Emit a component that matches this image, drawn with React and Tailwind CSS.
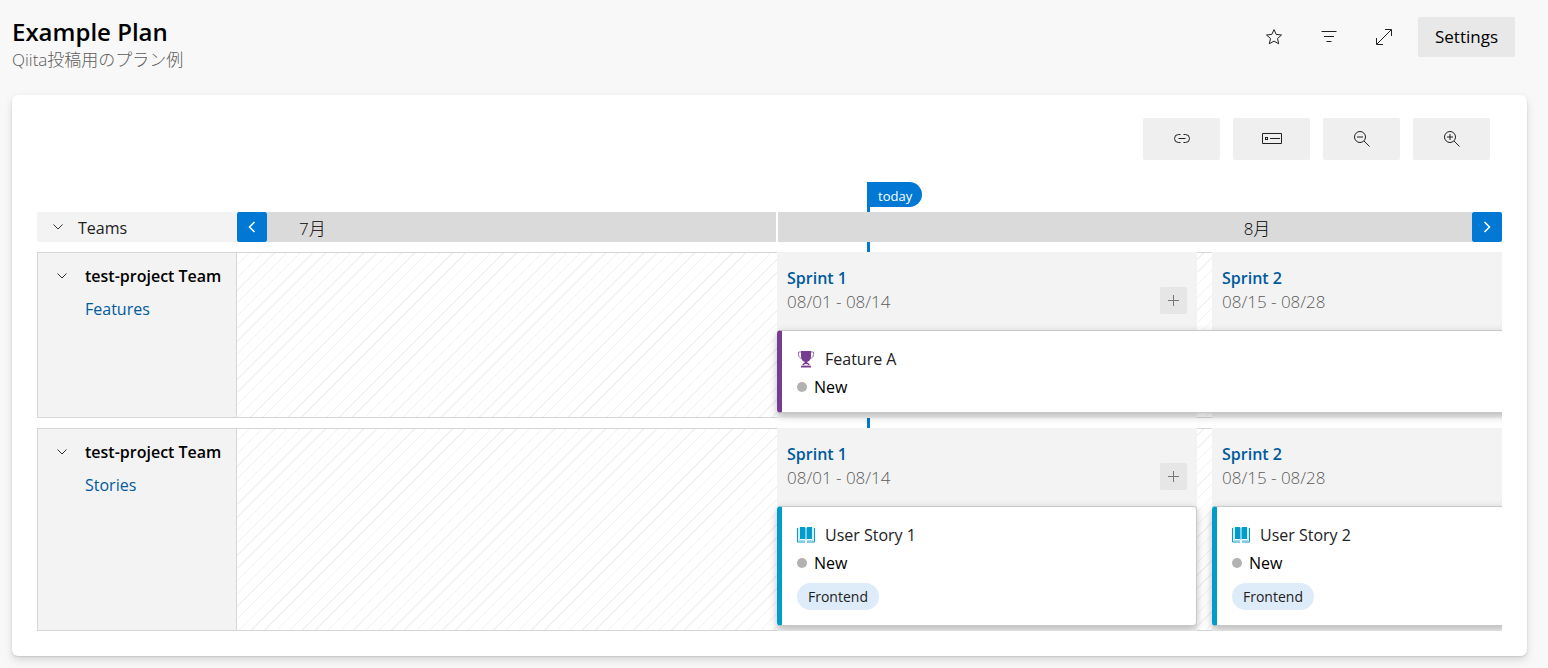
import React from 'react';

const HATCH = 'bg-[repeating-linear-gradient(135deg,#ffffff_0px,#ffffff_8px,#f1f1f1_8px,#f1f1f1_9px)]';

const sprints = [
  { name: 'Sprint 1', dates: '08/01 - 08/14', column: 'col-start-2', canAdd: true },
  { name: 'Sprint 2', dates: '08/15 - 08/28', column: 'col-start-4', canAdd: false },
];

const teams = [
  {
    name: 'test-project Team',
    backlog: 'Features',
    items: [{ title: 'Feature A', type: 'feature', state: 'New', column: 'col-start-2 col-span-3' }],
  },
  {
    name: 'test-project Team',
    backlog: 'Stories',
    items: [
      { title: 'User Story 1', type: 'story', state: 'New', tag: 'Frontend', column: 'col-start-2' },
      { title: 'User Story 2', type: 'story', state: 'New', tag: 'Frontend', column: 'col-start-4' },
    ],
  },
];

const Icon = ({ className = 'w-4 h-4', children }) => (
  <svg viewBox="0 0 16 16" className={className} fill="none" stroke="currentColor" aria-hidden="true">
    {children}
  </svg>
);

const StarIcon = () => (
  <Icon>
    <path d="M8 .6l2.2 4.8 5.3.6-4 3.5 1.2 5.3L8 12.1l-4.7 2.7 1.2-5.3-4-3.5 5.3-.6z" strokeLinejoin="round" />
  </Icon>
);

const FilterIcon = () => (
  <Icon>
    <path d="M.5 2.5h15M3 7.5h10M5.5 12.5h5" />
  </Icon>
);

const ExpandIcon = () => (
  <Icon>
    <path d="M1 15L15 1M9 .5h6.5V7M.5 9v6.5H7" />
  </Icon>
);

const LinkIcon = () => (
  <Icon>
    <path d="M6.5 3.5h-2a4 4 0 0 0 0 8h2M9.5 3.5h2a4 4 0 0 1 0 8h-2M4.5 7.5h7" />
  </Icon>
);

const FieldsIcon = () => (
  <svg viewBox="0 0 20 12" className="w-5 h-3" fill="none" stroke="currentColor" aria-hidden="true">
    <path d="M.5 .5h19v10H.5zM8 5.5h10" />
    <rect x="3.5" y="4.5" width="2" height="2" />
  </svg>
);

const ZoomIcon = ({ plus }) => (
  <Icon>
    <circle cx="6" cy="6" r="5.5" />
    <path d="M10 10l5.5 5.5M3 6h6" />
    {plus && <path d="M6 3v6" />}
  </Icon>
);

const ChevronDown = () => (
  <svg viewBox="0 0 10 6" className="w-[10px] h-[6px]" fill="none" stroke="currentColor" aria-hidden="true">
    <path d="M.5.5L5 5 9.5.5" />
  </svg>
);

const ChevronSide = ({ right }) => (
  <svg viewBox="0 0 8 12" className="w-2 h-3" fill="none" stroke="currentColor" strokeWidth="1.5" aria-hidden="true">
    <path d={right ? 'M1.5 1l5 5-5 5' : 'M6.5 1l-5 5 5 5'} />
  </svg>
);

const TrophyIcon = () => (
  <svg viewBox="0 0 18 18" className="w-[18px] h-[18px] text-[#773b93]" fill="currentColor" aria-hidden="true">
    <path d="M4 1h10v5.5c0 3-1.6 4.8-3.6 5.3v1.3h.8l2 2.2H4.8l2-2.2h.8v-1.3C5.6 11.3 4 9.5 4 6.5z" />
    <path d="M4 2H1.5v2.7c0 2 1.2 3.2 3.2 3.5M14 2h2.5v2.7c0 2-1.2 3.2-3.2 3.5" fill="none" stroke="currentColor" strokeOpacity=".7" />
    <path d="M4 15.8h10v1.7H4z" />
    <path d="M7.3 14.6h3.4" stroke="#fff" strokeWidth="1" />
  </svg>
);

const BookIcon = () => (
  <svg viewBox="0 0 18 18" className="w-[18px] h-[18px] text-[#009ccc]" fill="currentColor" aria-hidden="true">
    <path d="M3 1h4.5l1 .7v11.8l-1-.5H3zM15 1h-4.5l-1 .7v11.8l1-.5H15z" />
    <path d="M.5 2v14h7.5M17.5 2v14H10" fill="none" stroke="currentColor" />
    <path d="M2 1.5v13h6M16 1.5v13h-6" fill="none" stroke="currentColor" strokeOpacity=".35" />
  </svg>
);

const ToolButton = ({ label, children }) => (
  <button aria-label={label} className="flex items-center justify-center w-[77px] h-[42px] rounded-xs bg-[#efefef] text-[#212121]">
    {children}
  </button>
);

const HeaderButton = ({ label, children }) => (
  <button aria-label={label} className="flex items-center justify-center w-[42px] h-10 text-[#212121]">
    {children}
  </button>
);

const SprintHeader = ({ sprint }) => (
  <div className={`${sprint.column} row-start-1 row-span-2 -my-px bg-[#f3f3f3] px-[10px] pt-[14px]`}>
    <div className="flex justify-between items-end">
      <div className="leading-6">
        <a href="#" className="block font-semibold text-[#005a9e]">{sprint.name}</a>
        <p className="text-[17px] font-light text-[#5c5c5c]">{sprint.dates}</p>
      </div>
      {sprint.canAdd && (
        <button aria-label={`Add item to ${sprint.name}`} className="flex items-center justify-center w-[27px] h-[27px] rounded-xs bg-[#e6e6e6] text-[#767676]">
          <svg viewBox="0 0 11 11" className="w-[11px] h-[11px]" fill="none" stroke="currentColor" aria-hidden="true">
            <path d="M5.5 0v11M0 5.5h11" />
          </svg>
        </button>
      )}
    </div>
  </div>
);

const WorkItemCard = ({ item }) => (
  <article
    className={`${item.column} ${item.type === 'feature' ? 'border-l-[#773b93]' : 'border-l-[#009ccc]'} row-start-2 self-start mb-1 rounded-sm border border-[#c8c8c8] border-l-[5px] bg-white px-[15px] pt-[14px] pb-[11px] leading-7 shadow-[0_3px_8px_rgba(0,0,0,0.25)]`}
  >
    <h3 className="flex items-center gap-[10px] text-[#212121]">
      {item.type === 'feature' ? <TrophyIcon /> : <BookIcon />}
      {item.title}
    </h3>
    <p className="flex items-center gap-[7px] text-black">
      <span className="w-[10px] h-[10px] rounded-full bg-[#b2b2b2]" />
      {item.state}
    </p>
    {item.tag && (
      <span className="block w-fit h-[27px] mt-[6px] mb-1 rounded-full bg-[#deecf9] px-[11px] text-sm leading-7 text-[#212121]">
        {item.tag}
      </span>
    )}
  </article>
);

const TeamRow = ({ team }) => (
  <section className="flex">
    <div className="flex shrink-0 w-[200px] border border-[#d6d6d6] bg-[#f3f3f3] pt-[9px]">
      <button aria-label={`Collapse ${team.name}`} className="flex items-center justify-center w-[47px] h-7 text-[#333333]">
        <ChevronDown />
      </button>
      <div className="whitespace-nowrap">
        <h2 className="font-semibold leading-7 text-black">{team.name}</h2>
        <a href="#" className="block mt-[5px] leading-7 text-[#005a9e]">{team.backlog}</a>
      </div>
    </div>
    <div className="flex-1 min-w-0 overflow-x-clip">
      <div className={`grid grid-cols-[540px_420px_15px_420px] grid-rows-[77px_auto] border-y border-[#d6d6d6] ${HATCH}`}>
        {sprints.map(s => <SprintHeader key={s.name} sprint={s} />)}
        {team.items.map(i => <WorkItemCard key={i.title} item={i} />)}
      </div>
    </div>
  </section>
);

export default function App() {
  return (
    <div className="min-h-screen bg-[#f8f8f8] pl-3 pr-[21px] pb-3 font-['Open_Sans','Noto_Sans_CJK_JP',sans-serif] text-base text-[#212121]">
      <header className="flex justify-between items-start pt-[17px] pr-3 h-[95px]">
        <div>
          <h1 className="text-2xl leading-[30px] font-semibold text-black">Example Plan</h1>
          <p className="text-[17px] leading-[26px] font-light text-[#5c5c5c]">Qiita投稿用のプラン例</p>
        </div>
        <div className="flex gap-[13px]">
          <HeaderButton label="Favorite"><StarIcon /></HeaderButton>
          <HeaderButton label="Filter"><FilterIcon /></HeaderButton>
          <HeaderButton label="Full screen"><ExpandIcon /></HeaderButton>
          <button className="h-10 px-[17px] rounded-xs bg-[#e8e8e8] text-[17px] text-black">Settings</button>
        </div>
      </header>

      <main className="rounded-md bg-white px-[25px] pt-[23px] pb-[25px] shadow-[0_4px_9px_rgba(0,0,0,0.13),0_1px_2px_rgba(0,0,0,0.11)]">
        <div className="flex justify-end gap-[13px] pr-3">
          <ToolButton label="Dependencies"><LinkIcon /></ToolButton>
          <ToolButton label="Toggle fields"><FieldsIcon /></ToolButton>
          <ToolButton label="Zoom out"><ZoomIcon /></ToolButton>
          <ToolButton label="Zoom in"><ZoomIcon plus /></ToolButton>
        </div>

        <div className="relative mt-[22px] pt-[30px]">
          {/* today marker, runs behind the header and the team rows */}
          <div className="absolute top-0 bottom-0 left-[830px] border-l-[3px] border-[#0078d4]">
            <span className="block h-[25px] rounded-r-full bg-[#0078d4] pl-2 pr-[10px] text-[13px] leading-7 text-white">today</span>
          </div>

          <div className="relative flex h-[30px]">
            <div className="flex shrink-0 w-[200px] rounded-xs bg-[#f3f3f3]">
              <button aria-label="Collapse all teams" className="flex items-center justify-center w-[41px] h-full text-[#333333]">
                <ChevronDown />
              </button>
              <span className="leading-8">Teams</span>
            </div>
            <button aria-label="Previous" className="flex items-center justify-center shrink-0 w-[30px] rounded-xs bg-[#0078d4] text-white">
              <ChevronSide />
            </button>
            <div className="flex flex-1 min-w-0 gap-[2px] overflow-hidden bg-white text-[17px] leading-[34px] font-light text-black">
              <div className="shrink-0 w-[509px] bg-[#dadada] pl-8">7月</div>
              <div className="shrink-0 w-[958px] bg-[#dadada] text-center">8月</div>
            </div>
            <button aria-label="Next" className="flex items-center justify-center shrink-0 w-[30px] rounded-xs bg-[#0078d4] text-white">
              <ChevronSide right />
            </button>
          </div>

          <div className="relative flex flex-col gap-[10px] mt-[10px] overflow-hidden">
            {teams.map(t => <TeamRow key={t.backlog} team={t} />)}
          </div>
        </div>
      </main>
    </div>
  );
}
